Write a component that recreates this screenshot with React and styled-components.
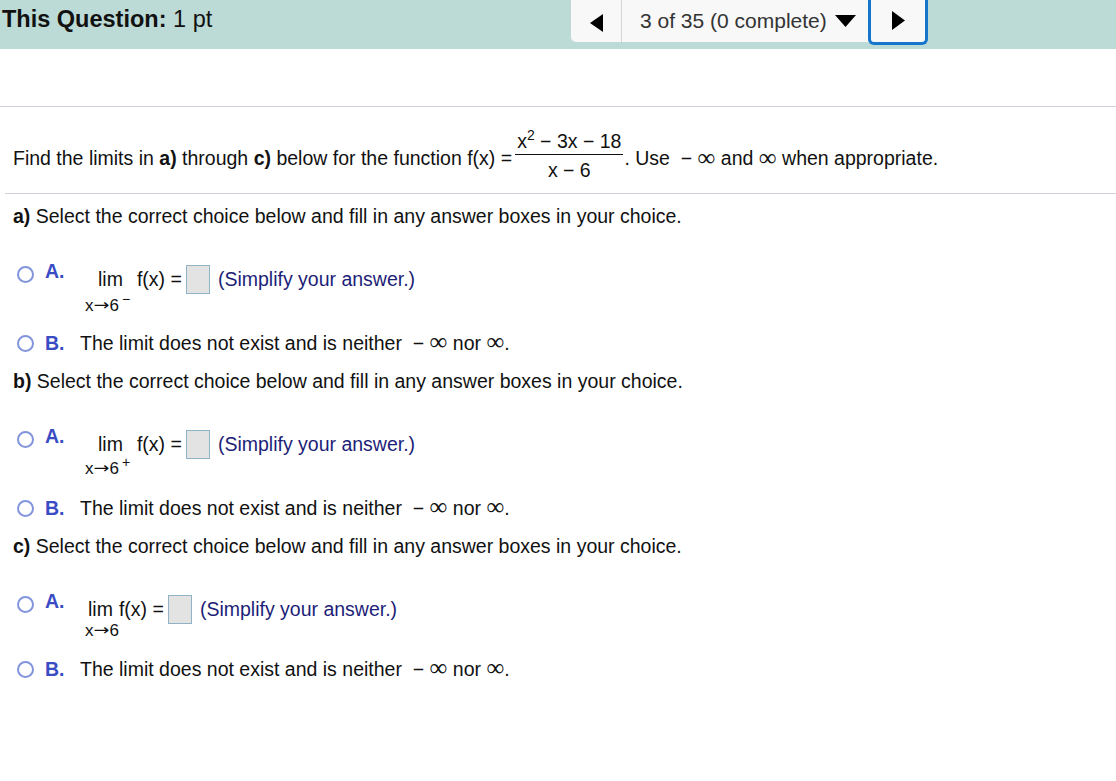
import styled, { createGlobalStyle } from "styled-components";

const Global = createGlobalStyle`
  body {
    margin: 0;
    font-family: "Liberation Sans", Arial, sans-serif;
    color: #111;
    background: #fff;
  }
`;

const Page = styled.div`
  width: 1116px;
  min-height: 781px;
  overflow: hidden;
`;

const Header = styled.div`
  height: 49px;
  background: #bcdad6;
  display: flex;
  align-items: flex-start;
`;

const Title = styled.div`
  font-size: 23.5px;
  padding: 6px 0 0 2px;
  width: 571px;
  box-sizing: border-box;
  flex: none;
`;

const Nav = styled.div`
  display: flex;
  align-items: flex-start;
`;

const NavBox = styled.div`
  display: flex;
  height: 42px;
  background: #f8f8f8;
  border-radius: 0 0 0 5px;
`;

const ArrowBtn = styled.div`
  width: 51px;
  display: flex;
  align-items: center;
  justify-content: center;
  border-right: 1px solid #d6d6d6;
  padding-top: 4px;
  box-sizing: border-box;
`;

const Count = styled.div`
  width: 246px;
  display: flex;
  align-items: center;
  padding-left: 18px;
  box-sizing: border-box;
  font-size: 21px;
  color: #333;
  gap: 8px;
`;

const NextBtn = styled.div`
  width: 60px;
  height: 45px;
  box-sizing: border-box;
  border: 3px solid #1576cc;
  border-top: none;
  border-radius: 0 0 6px 6px;
  background: #f8f8f8;
  display: flex;
  align-items: center;
  justify-content: center;
  padding-bottom: 2px;
`;

const Triangle = ({ dir }) => {
  const pts = {
    left: "13,0 13,18 0,9",
    right: "0,0 0,19 13,9.5",
    down: "0,0 21,0 10.5,12",
  }[dir];
  const w = dir === "down" ? 21 : 13;
  const h = dir === "down" ? 12 : dir === "right" ? 19 : 18;
  return (
    <svg width={w} height={h} viewBox={`0 0 ${w} ${h}`}>
      <polygon points={pts} fill="#000" />
    </svg>
  );
};

const Spacer = styled.div`
  height: ${(p) => p.h}px;
`;

const Rule = styled.div`
  height: 1px;
  background: #cfd1dc;
  margin-left: ${(p) => p.indent || 0}px;
`;

const Question = styled.div`
  display: flex;
  align-items: center;
  height: 86px;
  box-sizing: border-box;
  padding: 16px 0 0 13px;
  font-size: 19.5px;
  white-space: pre;
`;

const Frac = styled.span`
  display: inline-flex;
  flex-direction: column;
  align-items: center;
  margin: 0 1px 0 3px;
  position: relative;
  top: -3px;
`;

const Num = styled.span`
  padding: 0 2px 2px;
  border-bottom: 1px solid #111;
  line-height: 22px;
  sup {
    font-size: 14px;
    vertical-align: 8px;
    line-height: 0;
  }
`;

const Den = styled.span`
  padding-top: 4px;
  line-height: 22px;
`;

const Part = styled.div`
  font-size: 19.5px;
  line-height: 24px;
  padding: 10px 0 0 13px;
  height: ${(p) => p.h}px;
  box-sizing: border-box;
`;

const Choice = styled.div`
  display: flex;
  align-items: flex-start;
  padding-left: 17px;
  height: ${(p) => p.h}px;
  box-sizing: border-box;
  font-size: 19.5px;
  line-height: 24px;
`;

const Radio = styled.span`
  width: 17px;
  height: 17px;
  box-sizing: border-box;
  border: 2px solid #8295dc;
  border-radius: 50%;
  flex: none;
  margin-top: ${(p) => p.top}px;
`;

const Letter = styled.span`
  color: #3a4cc4;
  font-weight: bold;
  margin-left: 11px;
  width: ${(p) => p.w}px;
  flex: none;
  margin-top: ${(p) => p.top}px;
`;

const Lim = styled.div`
  display: flex;
  flex-direction: column;
  margin-top: 15px;
`;

const LimRow = styled.div`
  display: flex;
  align-items: center;
  height: 30px;
  padding-left: ${(p) => p.pad}px;
  white-space: pre;
`;

const LimWord = styled.span`
  margin-right: ${(p) => p.gap}px;
`;

const Sub = styled.div`
  font-size: 17px;
  line-height: 20px;
  margin-top: ${(p) => p.top}px;
  white-space: pre;
  sup {
    font-size: 14px;
    vertical-align: 7px;
    line-height: 0;
    margin-left: 3px;
  }
`;

const Arrow = styled.span`
  font-family: "DejaVu Sans", sans-serif;
  font-size: 19px;
  line-height: 0;
  display: inline-block;
  transform: scaleY(0.8);
`;

const AnswerBox = styled.span`
  display: inline-block;
  width: 24px;
  height: 29px;
  box-sizing: border-box;
  border: 1px solid #8fb4c8;
  background: #e3e3e3;
  margin: 0 8px 0 4px;
`;

const Hint = styled.span`
  color: #1d1e78;
`;

const Plain = styled.span`
  white-space: pre;
`;

const Infty = styled.span`
  font-family: "Liberation Serif", "Times New Roman", serif;
  font-size: 25px;
  line-height: 0;
`;

function LimitChoice({ sup, pad, gap, subTop, h }) {
  return (
    <Choice h={h}>
      <Radio top={17} />
      <Letter w={40} top={10}>A.</Letter>
      <Lim>
        <LimRow pad={pad}>
          <LimWord gap={gap}>lim</LimWord>
          {"f(x) ="}
          <AnswerBox />
          <Hint>(Simplify your answer.)</Hint>
        </LimRow>
        <Sub top={subTop}>
          x<Arrow>→</Arrow>6{sup && <sup>{sup}</sup>}
        </Sub>
      </Lim>
    </Choice>
  );
}

function NeitherChoice({ h }) {
  return (
    <Choice h={h}>
      <Radio top={4} />
      <Letter w={35} top={0}>B.</Letter>
      <Plain>
        The limit does not exist and is neither  − <Infty>∞</Infty> nor <Infty>∞</Infty>.
      </Plain>
    </Choice>
  );
}

export default function App() {
  return (
    <Page>
      <Global />
      <Header>
        <Title>
          <b>This Question:</b> 1 pt
        </Title>
        <Nav>
          <NavBox>
            <ArrowBtn>
              <Triangle dir="left" />
            </ArrowBtn>
            <Count>
              3 of 35 (0 complete)
              <Triangle dir="down" />
            </Count>
          </NavBox>
          <NextBtn>
            <Triangle dir="right" />
          </NextBtn>
        </Nav>
      </Header>
      <Spacer h={57} />
      <Rule />
      <Question>
        Find the limits in <b>a)</b> through <b>c)</b> below for the function f(x) =
        <Frac>
          <Num>
            x<sup>2</sup> − 3x − 18
          </Num>
          <Den>x − 6</Den>
        </Frac>
        . Use  − <Infty>∞</Infty> and <Infty>∞</Infty> when appropriate.
      </Question>
      <Rule indent={5} />
      <Part h={55}>
        <b>a)</b> Select the correct choice below and fill in any answer boxes in your choice.
      </Part>
      <LimitChoice sup="−" pad={13} gap={14} subTop={2} h={82} />
      <NeitherChoice h={28} />
      <Part h={55}>
        <b>b)</b> Select the correct choice below and fill in any answer boxes in your choice.
      </Part>
      <LimitChoice sup="+" pad={13} gap={14} subTop={0} h={82} />
      <NeitherChoice h={28} />
      <Part h={55}>
        <b>c)</b> Select the correct choice below and fill in any answer boxes in your choice.
      </Part>
      <LimitChoice pad={3} gap={6} subTop={-3} h={78} />
      <NeitherChoice h={28} />
    </Page>
  );
}
